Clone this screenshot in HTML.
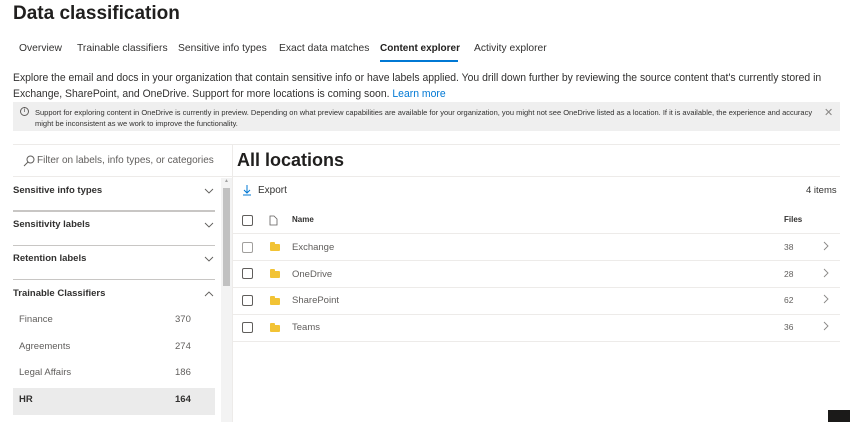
<!DOCTYPE html>
<html><head><style>
*{margin:0;padding:0;box-sizing:border-box}
body{width:850px;height:422px;overflow:hidden;background:#fff;font-family:"Liberation Sans",sans-serif;color:#323130;position:relative}
.a{position:absolute;white-space:nowrap}
.hl{position:absolute;height:1px;background:#edebe9}
.cb{position:absolute;width:11px;height:11px;border:1px solid #605e5c;border-radius:2px}
.fold{position:absolute;width:10px;height:7px;background:#f2c335;border-radius:1px}
.fold:before{content:"";position:absolute;left:0;top:-2px;width:5px;height:3px;background:#f2c335;border-radius:1px 1px 0 0}
.t{position:absolute;top:43px;font-size:10.3px;color:#323130;white-space:nowrap}
</style></head><body>
<div class="a" style="left:13px;top:3px;font-size:19px;font-weight:bold;color:#201f1e">Data classification</div>
<div class="t" style="left:19px">Overview</div>
<div class="t" style="left:77px">Trainable classifiers</div>
<div class="t" style="left:178px">Sensitive info types</div>
<div class="t" style="left:279px">Exact data matches</div>
<div class="t" style="left:380px;color:#201f1e;font-weight:bold;font-size:10px">Content explorer</div>
<div class="t" style="left:474px">Activity explorer</div>
<div style="position:absolute;left:380px;top:60px;width:78px;height:2px;background:#0078d4"></div>
<div class="a" style="left:13px;top:70px;font-size:11.2px;line-height:16px;color:#323130;transform:scaleX(0.93);transform-origin:0 0">Explore the email and docs in your organization that contain sensitive info or have labels applied. You drill down further by reviewing the source content that's currently stored in<br>Exchange, SharePoint, and OneDrive. Support for more locations is coming soon. <span style="color:#0078d4">Learn more</span></div>
<div style="position:absolute;left:13px;top:102px;width:827px;height:29px;background:#efefef"></div>
<div class="a" style="left:20px;top:107px;width:9px;height:9px;border:1px solid #605e5c;border-radius:50%;font-size:6px;line-height:7px;text-align:center">i</div>
<div class="a" style="left:35px;top:107px;font-size:7.5px;line-height:11px;color:#323130">Support for exploring content in OneDrive is currently in preview. Depending on what preview capabilities are available for your organization, you might not see OneDrive listed as a location. If it is available, the experience and accuracy<br>might be inconsistent as we work to improve the functionality.</div>
<div class="a" style="left:824px;top:106px;font-size:11px;color:#8a8886">✕</div>
<div class="hl" style="left:13px;top:144px;width:827px"></div>
<svg class="a" style="left:23px;top:155px" width="12" height="12" fill="none" stroke="#605e5c" stroke-width="1"><circle cx="7.5" cy="4.5" r="3.5"/><path d="M5 7L1 11"/></svg>
<div class="a" style="left:37px;top:155px;font-size:10px;color:#605e5c">Filter on labels, info types, or categories</div>
<div class="hl" style="left:13px;top:176px;width:219px"></div>
<div class="a" style="left:13px;top:185px;font-size:9.5px;font-weight:bold">Sensitive info types</div>
<div class="a" style="left:13px;top:219px;font-size:9.5px;font-weight:bold">Sensitivity labels</div>
<div class="a" style="left:13px;top:253px;font-size:9.5px;font-weight:bold">Retention labels</div>
<div class="a" style="left:13px;top:288px;font-size:9.5px;font-weight:bold">Trainable Classifiers</div>
<div style="position:absolute;left:13px;top:210px;width:202px;height:2px;background:#c8c6c4"></div>
<div style="position:absolute;left:13px;top:245px;width:202px;height:1px;background:#c8c6c4"></div>
<div style="position:absolute;left:13px;top:279px;width:202px;height:1px;background:#c8c6c4"></div>
<svg class="a" style="left:204px;top:187px" width="10" height="100" viewBox="0 0 10 100" fill="none" stroke="#605e5c" stroke-width="0.9"><path d="M1 2l4 4 4-4M1 36l4 4 4-4M1 70l4 4 4-4"/></svg>
<svg class="a" style="left:204px;top:290px" width="10" height="8" fill="none" stroke="#605e5c" stroke-width="0.9"><path d="M1 6l4-4 4 4"/></svg>
<div class="a" style="left:19px;top:314px;font-size:9.5px;color:#605e5c">Finance</div><div class="a" style="left:175px;top:314px;font-size:9.5px;color:#605e5c">370</div>
<div class="a" style="left:19px;top:341px;font-size:9.5px;color:#605e5c">Agreements</div><div class="a" style="left:175px;top:341px;font-size:9.5px;color:#605e5c">274</div>
<div class="a" style="left:19px;top:367px;font-size:9.5px;color:#605e5c">Legal Affairs</div><div class="a" style="left:175px;top:367px;font-size:9.5px;color:#605e5c">186</div>
<div style="position:absolute;left:13px;top:388px;width:202px;height:27px;background:#ebebeb"></div>
<div class="a" style="left:19px;top:394px;font-size:9.5px;font-weight:bold">HR</div><div class="a" style="left:175px;top:394px;font-size:9.5px;font-weight:bold">164</div>
<div style="position:absolute;left:221px;top:178px;width:11px;height:244px;background:#f3f3f3"></div>
<div style="position:absolute;left:223px;top:188px;width:7px;height:98px;background:#c1c1c1"></div>
<div class="a" style="left:224px;top:178px;font-size:5px;color:#a0a0a0">▲</div>
<div style="position:absolute;left:232px;top:145px;width:1px;height:277px;background:#edebe9"></div>
<div class="a" style="left:237px;top:150px;font-size:18px;font-weight:bold;color:#201f1e">All locations</div>
<div class="hl" style="left:232px;top:176px;width:608px"></div>
<svg class="a" style="left:242px;top:184px" width="10" height="12" fill="none" stroke="#0078d4" stroke-width="1"><path d="M5 1v8M2 6l3 3 3-3M1 11h8"/></svg>
<div class="a" style="left:258px;top:185px;font-size:10px;color:#323130">Export</div>
<div class="a" style="left:806px;top:185px;font-size:9.5px;color:#323130">4 items</div>
<div class="cb" style="left:242px;top:215px"></div>
<svg class="a" style="left:269px;top:215px" width="9" height="11" fill="none" stroke="#605e5c" stroke-width="0.8"><path d="M1 1h4l3 3v6H1z"/></svg>
<div class="a" style="left:292px;top:215px;font-size:8px;font-weight:bold">Name</div>
<div class="a" style="left:784px;top:215px;font-size:8px;font-weight:bold">Files</div>
<div class="hl" style="left:232px;top:233px;width:608px"></div>
<div class="hl" style="left:232px;top:260px;width:608px"></div>
<div class="hl" style="left:232px;top:287px;width:608px"></div>
<div class="hl" style="left:232px;top:314px;width:608px"></div>
<div class="hl" style="left:232px;top:341px;width:608px"></div>
<div class="cb" style="left:242px;top:242px;border-color:#a19f9d"></div>
<div class="cb" style="left:242px;top:268px"></div>
<div class="cb" style="left:242px;top:295px"></div>
<div class="cb" style="left:242px;top:322px"></div>
<div class="fold" style="left:270px;top:244px"></div>
<div class="fold" style="left:270px;top:271px"></div>
<div class="fold" style="left:270px;top:298px"></div>
<div class="fold" style="left:270px;top:325px"></div>
<div class="a" style="left:292px;top:242px;font-size:9.5px;color:#605e5c">Exchange</div>
<div class="a" style="left:292px;top:269px;font-size:9.5px;color:#605e5c">OneDrive</div>
<div class="a" style="left:292px;top:295px;font-size:9.5px;color:#605e5c">SharePoint</div>
<div class="a" style="left:292px;top:322px;font-size:9.5px;color:#605e5c">Teams</div>
<div class="a" style="left:784px;top:242px;font-size:8.5px;color:#605e5c">38</div>
<div class="a" style="left:784px;top:269px;font-size:8.5px;color:#605e5c">28</div>
<div class="a" style="left:784px;top:295px;font-size:8.5px;color:#605e5c">62</div>
<div class="a" style="left:784px;top:322px;font-size:8.5px;color:#605e5c">36</div>
<svg class="a" style="left:823px;top:241px" width="6" height="90" fill="none" stroke="#8a8886" stroke-width="0.9"><path d="M1 1l4 4-4 4M1 28l4 4-4 4M1 54l4 4-4 4M1 81l4 4-4 4"/></svg>
<div style="position:absolute;left:828px;top:410px;width:22px;height:12px;background:#1b1a19"></div>
</body></html>
